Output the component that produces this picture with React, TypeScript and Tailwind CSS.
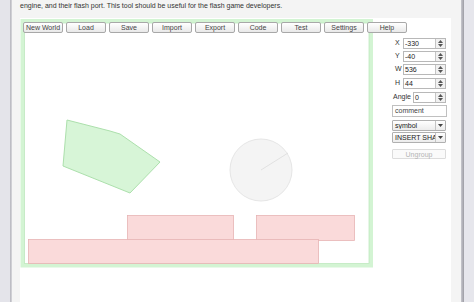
import type { ReactNode } from "react";

const font = { fontFamily: '"Liberation Sans", Arial, sans-serif' };

const TOOLS = ["New World", "Load", "Save", "Import", "Export", "Code", "Test", "Settings", "Help"];

function Spinner() {
  return (
    <div className="flex h-full w-[10px] shrink-0 flex-col items-center justify-center gap-[1px] border-l border-[#c4c4c4] bg-[#f1f1f1]">
      <svg width="5" height="3" viewBox="0 0 5 3">
        <path d="M0 3 L2.5 0 L5 3 Z" fill="#555" />
      </svg>
      <svg width="5" height="3" viewBox="0 0 5 3">
        <path d="M0 0 L2.5 3 L5 0 Z" fill="#555" />
      </svg>
    </div>
  );
}

function NumberField({ label, value, wide }: { label: string; value: string; wide?: boolean }) {
  return (
    <div className={wide ? "flex h-[11px] items-center pl-[1px]" : "flex h-[11px] items-center pl-[3px]"}>
      <span className={wide ? "w-[20px] text-[7px] text-[#333]" : "w-[8px] text-[7px] text-[#333]"}>{label}</span>
      <div className="flex h-full flex-1 items-center border border-[#b8b8b8] bg-white">
        <span className="flex-1 pl-[1px] text-[7px] leading-none text-[#222]">{value}</span>
        <Spinner />
      </div>
    </div>
  );
}

function Select({ children }: { children: ReactNode }) {
  return (
    <div className="flex h-[11px] items-center overflow-hidden rounded-[1px] border border-[#b0b0b0] bg-gradient-to-b from-white to-[#ececec]">
      <span className="min-w-0 flex-1 overflow-hidden whitespace-nowrap pl-[2px] text-[7px] leading-none text-[#222]">
        {children}
      </span>
      <div className="flex h-full w-[10px] shrink-0 items-center justify-center border-l border-[#c4c4c4]">
        <svg width="5" height="3" viewBox="0 0 5 3">
          <path d="M0 0 L2.5 3 L5 0 Z" fill="#444" />
        </svg>
      </div>
    </div>
  );
}

function Canvas() {
  return (
    <div className="relative h-[250px] w-[356px] shrink-0">
      <svg width="356" height="250" viewBox="0 0 356 250" className="block">
        <rect x="2.5" y="2" width="348.5" height="244.5" fill="none" stroke="#d3f4d3" strokeWidth="4" />
        <rect x="4.6" y="4" width="344.4" height="240.6" fill="none" stroke="#b8e6b8" strokeWidth="0.7" />
        <polygon
          points="47,101 90,112 100,115 140,143 110,174 43,147"
          fill="#d7f5d7"
          stroke="#ace0ac"
          strokeWidth="1"
        />
        <circle cx="241" cy="151" r="31" fill="#f4f4f4" stroke="#e6e6e6" strokeWidth="1" />
        <line x1="241" y1="151" x2="268" y2="134" stroke="#dcdcdc" strokeWidth="0.8" />
        <rect x="107.5" y="196.5" width="106" height="25" fill="#fadada" stroke="#e6b4b4" strokeWidth="0.8" />
        <rect x="236.5" y="196.5" width="98" height="25" fill="#fadada" stroke="#e6b4b4" strokeWidth="0.8" />
        <rect x="8.5" y="220.5" width="290" height="24" fill="#fadada" stroke="#e6b4b4" strokeWidth="0.8" />
      </svg>
      <div className="absolute left-[3px] top-[3px] flex gap-[3px]">
        {TOOLS.map((t) => (
          <button
            key={t}
            type="button"
            className="flex h-[11px] w-[40px] items-center justify-center rounded-[2px] border border-[#a8a8a8] bg-gradient-to-b from-white to-[#e9e9e9] text-[7px] leading-none text-[#444]"
          >
            {t}
          </button>
        ))}
      </div>
    </div>
  );
}

function SidePanel() {
  return (
    <div className="ml-[16px] flex w-[55px] flex-col pt-[19px]">
      <div className="flex flex-col gap-[2px] pr-[1px]">
        <NumberField label="X" value="-330" />
        <NumberField label="Y" value="-40" />
        <NumberField label="W" value="536" />
        <div className="mt-[1px]">
          <NumberField label="H" value="44" />
        </div>
        <div className="mt-[1px]">
          <NumberField label="Angle" value="0" wide />
        </div>
      </div>
      <div className="mt-[2px] h-[12px] border border-[#c0c0c0] bg-white pl-[2px] text-[7px] leading-[10px] text-[#444]">
        comment
      </div>
      <div className="mt-[3px] mr-[1px]">
        <Select>symbol</Select>
      </div>
      <div className="mt-[1px] mr-[1px]">
        <Select>INSERT SHAPE</Select>
      </div>
      <button
        type="button"
        className="mt-[6px] mr-[1px] h-[10px] rounded-[1px] border border-[#dcdcdc] bg-[#fafafa] text-[7px] leading-none text-[#b4b4b4]"
      >
        Ungroup
      </button>
    </div>
  );
}

export default function App() {
  return (
    <div className="flex h-[302px] w-[474px] overflow-hidden bg-white" style={font}>
      <div className="w-[10px] shrink-0 bg-[#e4e4ea]" />
      <div className="w-[2px] shrink-0 bg-gradient-to-r from-[#b4b4bc] to-[#d8d8dc]" />
      <div className="flex w-[449px] shrink-0 flex-col bg-[#f4f4f4]">
        <div className="h-[18px] shrink-0 overflow-hidden pl-[8px] pt-[1px] text-[7px] leading-[9px] text-[#333]">
          engine, and their flash port. This tool should be useful for the flash game developers.
        </div>
        <div className="ml-[8px] mr-[10px] flex flex-1 bg-white pt-[1px]">
          <Canvas />
          <SidePanel />
        </div>
      </div>
      <div className="w-[3px] shrink-0 bg-gradient-to-r from-[#c8c8ce] to-[#9c9ca4]" />
      <div className="flex-1 bg-[#e6e6ec]" />
    </div>
  );
}
